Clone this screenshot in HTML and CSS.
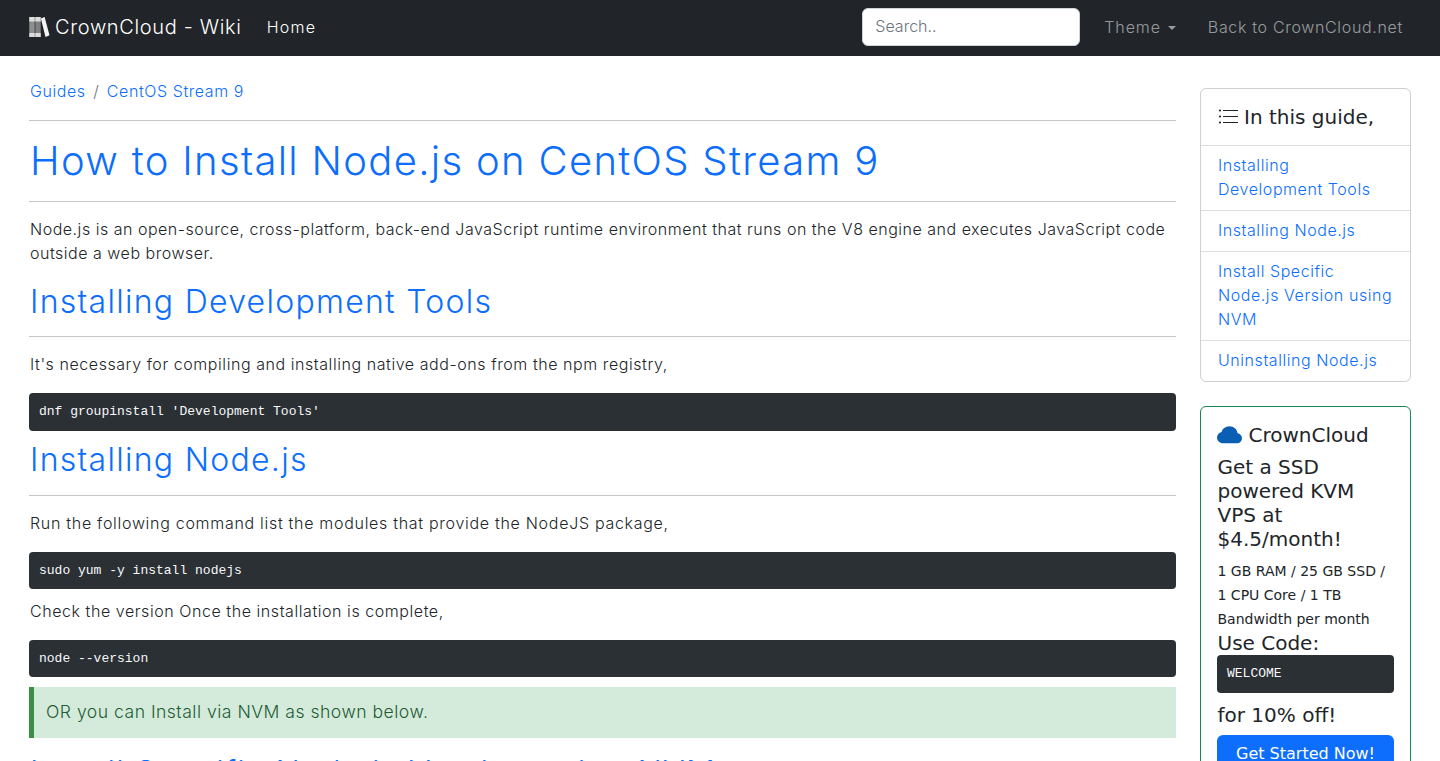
FILE: index.html
```html
<!DOCTYPE html>
<html lang="en">
<head>
<meta charset="utf-8">
<title>How to Install Node.js on CentOS Stream 9</title>
<link rel="stylesheet" href="styles.css">
</head>
<body>
<nav class="navbar">
  <a class="brand" href="#">
    <svg class="brand-icon" viewBox="0 0 21 20" width="21" height="20" aria-hidden="true">
      <path fill="#8f8f8f" d="M.3 0h5.400v20H.3z"/><path fill="#dcdcdc" d="M.3 0h5.400v4.500H.3zM.3 16h5.400v4H.3z"/>
      <path fill="#808080" d="M6.300 0h5.400v20H6.300z"/><path fill="#dcdcdc" d="M6.300 0h5.400v4.500H6.300zM6.300 16h5.400v4H6.300z"/>
      <path fill="#f4f4f4" d="M11.900 1.500L15.600 0l4.900 18.200-4 1.800z"/>
    </svg>
    <span>CrownCloud - Wiki</span>
  </a>
  <a class="nav-home" href="#">Home</a>
  <div class="nav-right">
    <input class="search" type="text" placeholder="Search..">
    <a class="nav-link theme" href="#">Theme<span class="caret"></span></a>
    <a class="nav-link back" href="#">Back to CrownCloud.net</a>
  </div>
</nav>
<div class="page">
  <main class="content">
    <div class="crumbs"><a href="#">Guides</a><span class="sep">/</span><a href="#">CentOS Stream 9</a></div>
    <hr class="rule crumbs-rule">
    <h1><a href="#">How to Install Node.js on CentOS Stream 9</a></h1>
    <hr class="rule h1-rule">
    <p class="intro">Node.js is an open-source, cross-platform, back-end JavaScript runtime environment that runs on the V8 engine and executes JavaScript code outside a web browser.</p>
    <h2><a href="#">Installing Development Tools</a></h2>
    <hr class="rule h2-rule">
    <p>It's necessary for compiling and installing native add-ons from the npm registry,</p>
    <pre>dnf groupinstall 'Development Tools'</pre>
    <h2><a href="#">Installing Node.js</a></h2>
    <hr class="rule h2-rule">
    <p class="wide">Run the following command list the modules that provide the NodeJS package,</p>
    <pre>sudo yum -y install nodejs</pre>
    <p>Check the version Once the installation is complete,</p>
    <pre>node --version</pre>
    <div class="note">OR you can Install via NVM as shown below.</div>
    <h2 class="last"><a href="#">Install Specific Node.js Version using NVM</a></h2>
  </main>
  <aside class="side">
    <section class="toc">
      <div class="toc-head">
        <svg viewBox="0 0 22 20" width="22" height="20" fill="#212529" aria-hidden="true"><path d="M6 3h15v1H6zM6 9h15v1H6zM6 15h15v1H6z"/><circle cx="3" cy="3.500" r="1.100"/><circle cx="3" cy="9.500" r="1.100"/><circle cx="3" cy="15.500" r="1.100"/></svg>
        <span>In this guide,</span>
      </div>
      <a class="toc-item" href="#">Installing Development Tools</a>
      <a class="toc-item" href="#">Installing Node.js</a>
      <a class="toc-item" href="#">Install Specific Node.js Version using NVM</a>
      <a class="toc-item" href="#">Uninstalling Node.js</a>
    </section>
    <section class="promo">
      <div class="promo-title">
        <svg viewBox="0 0 16 16" width="25" height="25" fill="#0a5fb4" aria-hidden="true"><path d="M4.406 3.342A5.53 5.53 0 0 1 8 2c2.69 0 4.923 2 5.166 4.579C14.758 6.804 16 8.137 16 9.773 16 11.569 14.502 13 12.687 13H3.781C1.708 13 0 11.366 0 9.318c0-1.763 1.266-3.223 2.942-3.593.143-.863.698-1.723 1.464-2.383z"/></svg>
        <span>CrownCloud</span>
      </div>
      <div class="promo-line">Get a SSD powered KVM VPS at $4.5/month!</div>
      <div class="promo-spec">1 GB RAM / 25 GB SSD / 1 CPU Core / 1 TB Bandwidth per month</div>
      <div class="promo-line">Use Code:</div>
      <pre class="code">WELCOME</pre>
      <div class="promo-line">for 10% off!</div>
      <a class="btn" href="#">Get Started Now!</a>
    </section>
  </aside>
</div>
</body>
</html>
```
FILE: styles.css
```css
* { box-sizing: border-box; }
html, body { margin: 0; padding: 0; }
body { font-family: Inter, "Open Sans", sans-serif; font-size: 16px; font-weight: 350; letter-spacing: 0.03em; line-height: 24px; color: #212529; background: #fff; }
a { color: #0d6efd; text-decoration: none; }

.navbar { height: 56px; background: #212529; display: flex; align-items: center; padding: 0 29px 2px 29px; }
.brand { display: flex; align-items: center; color: #fff; font-size: 20px; letter-spacing: 0.033em; }
.brand-icon { margin-right: 5px; }
.nav-home { color: #fff; margin-left: 25px; letter-spacing: 0.08em; }
.nav-right { margin-left: auto; display: flex; align-items: center; }
.search { width: 218px; height: 38px; border: 1px solid #ced4da; border-radius: 6px; padding: 5px 12px 7px; font: 300 16px Inter, sans-serif; letter-spacing: 0; margin-right: 16px; }
.search::placeholder { color: #6c757d; }
.nav-link { color: rgba(255,255,255,.55); padding: 0 8px; }
.theme { letter-spacing: 0.055em; }
.back { margin-left: 16px; letter-spacing: 0.042em; }
.caret { display: inline-block; margin-left: 7px; vertical-align: 3px; border-top: 4.8px solid; border-left: 4.8px solid transparent; border-right: 4.8px solid transparent; }

.page { display: grid; grid-template-columns: 1fr 211px; column-gap: 24px; padding: 0 29px; }
.content { padding-top: 23px; min-width: 0; }
.crumbs { display: flex; height: 24px; padding-left: 1px; letter-spacing: 0.036em; }
.sep { color: #6c757d; padding: 0 7.500px; }
.rule { border: 0; border-top: 1px solid #c6c7c8; margin: 0; }
.crumbs-rule { margin-top: 17px; }
h1, h2 { margin: 0; padding-left: 1px; font-weight: 350; line-height: 1.2; }
h1 { font-size: 40px; margin-top: 16px; letter-spacing: 0.033em; }
.h1-rule { margin-top: 16px; margin-bottom: 15px; }
h2 { font-size: 32px; letter-spacing: 0.04em; padding-top: 1px; }
.h2-rule { margin-top: 15px; margin-bottom: 15.500px; }
p { margin: 0 0 16.500px; padding-left: 1px; letter-spacing: 0.035em; }
p.wide { letter-spacing: 0.044em; }
p.intro { margin-bottom: 16.600px; letter-spacing: 0.032em; }
pre { margin: 0 0 9.800px; background: #2b3035; color: #f8f9fa; border-radius: 4px; padding: 10px; font: 400 13px/18px "Liberation Mono", monospace; letter-spacing: 0; height: 37.600px; }
.note { background: #d4ebdb; color: #1e5c33; border-left: 5px solid #3a8f45; padding: 13px 12px; height: 51px; font-size: 17.6px; }
h2.last { margin-top: 15px; }

.side { padding-top: 32px; font-family: "DejaVu Sans", sans-serif; font-weight: 400; letter-spacing: 0; }
.toc { border: 1px solid #ced0d2; border-radius: 6px; }
.toc-head { display: flex; align-items: center; gap: 5px; height: 57px; padding: 0 16px; font-size: 20px; border-bottom: 1px solid #dcdddf; }
.toc-item { display: block; padding: 7px 15px 9px 17px; border-bottom: 1px solid #dcdddf; font-family: Inter, sans-serif; font-weight: 350; letter-spacing: 0.035em; }
.toc-item:last-child { border-bottom: 0; }
.promo { border: 1px solid #198754; border-radius: 6px; margin-top: 24px; padding: 16px; }
.promo-title { display: flex; align-items: center; gap: 6.500px; height: 24px; font-size: 20px; }
.promo-line { font-size: 20px; line-height: 24px; padding-left: .5px; }
.promo-title + .promo-line { margin-top: 8px; }
.promo-spec { font-size: 14px; line-height: 24px; margin-top: 8px; padding-left: .5px; }
.code { margin: 0; padding: 10px; height: 38px; }
.code + .promo-line { margin-top: 10px; }
.btn { display: block; background: #0d6efd; color: #fff; text-align: center; border-radius: 6px; height: 38px; line-height: 38px; margin-top: 8px; }
```
